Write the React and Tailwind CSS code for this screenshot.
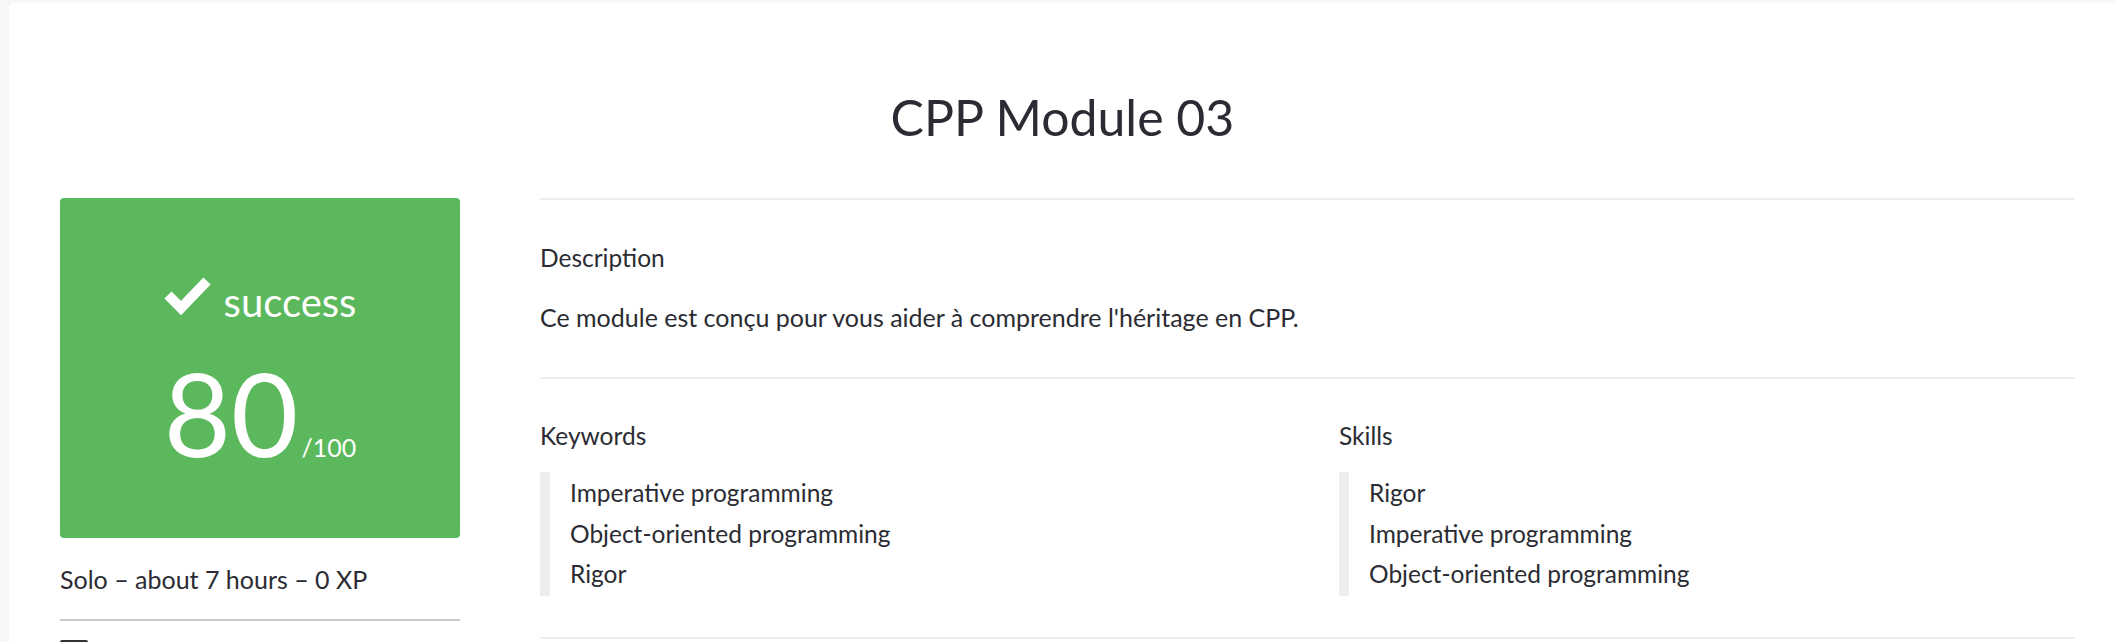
import React from 'react';

const keywords = ['Imperative programming', 'Object-oriented programming', 'Rigor'];
const skills = ['Rigor', 'Imperative programming', 'Object-oriented programming'];

const CheckIcon = () => (
  <svg width="48" height="42" viewBox="0 0 48 42" className="shrink-0">
    <path d="M4 21 L17 34 L43 7" fill="none" stroke="#ffffff" strokeWidth="10" strokeLinejoin="miter" />
  </svg>
);

const TagList = ({ title, items }) => (
  <div>
    <h3 className="text-[24.5px] leading-[30px]">{title}</h3>
    <ul className="mt-[21px] border-l-[10px] border-[#eeeeee] pl-[20px] py-[1px]">
      {items.map((item) => (
        <li key={item} className="text-[24.5px] leading-[40.5px]">{item}</li>
      ))}
    </ul>
  </div>
);

export default function App() {
  return (
    <div className="min-h-screen bg-[#f7f7f7] pl-[9px] pt-[3px] font-['Lato',sans-serif] text-[#2b2c33]">
      <div className="h-[639px] overflow-hidden rounded-tl-[5px] bg-white">
        {/* titre */}
        <div className="h-[195px] flex items-center justify-center">
          <h1 className="text-[50px] leading-[60px] mt-[32px]">CPP Module 03</h1>
        </div>

        <div className="flex gap-[80px] pl-[51px] pr-[41px]">
          {/* colonne gauche */}
          <div className="w-[400px] shrink-0">
            <div className="h-[340px] rounded-[4px] bg-[#5cb85c] text-white pt-[66px]">
              <div className="flex items-center justify-center gap-[12px]">
                <CheckIcon />
                <span className="text-[40px] leading-[48px] mt-[14px]">success</span>
              </div>
              <div className="mt-[29px] flex items-baseline justify-center">
                <span className="text-[116px] leading-none">80</span>
                <span className="text-[25px] leading-none ml-[3px]">/100</span>
              </div>
            </div>
            <p className="mt-[26px] text-[25px] leading-[30px]">Solo – about 7 hours – 0 XP</p>
            <div className="mt-[25px] border-t-2 border-[#cccccc]" />
            <div className="mt-[19px] h-[28px] w-[28px] rounded-[2px] border-2 border-[#333]" />
          </div>

          {/* colonne droite */}
          <div className="flex-1">
            <div className="border-t-2 border-[#eeeeee] pt-[43px] pb-[45px]">
              <h3 className="text-[24.5px] leading-[30px]">Description</h3>
              <p className="mt-[29px] text-[25px] leading-[30px]">
                Ce module est conçu pour vous aider à comprendre l'héritage en CPP.
              </p>
            </div>
            <div className="border-t-2 border-[#eeeeee] pt-[42px] pb-[41px] flex">
              <div className="w-[799px] shrink-0">
                <TagList title="Keywords" items={keywords} />
              </div>
              <div className="flex-1">
                <TagList title="Skills" items={skills} />
              </div>
            </div>
            <div className="border-t-2 border-[#eeeeee]" />
          </div>
        </div>
      </div>
    </div>
  );
}
